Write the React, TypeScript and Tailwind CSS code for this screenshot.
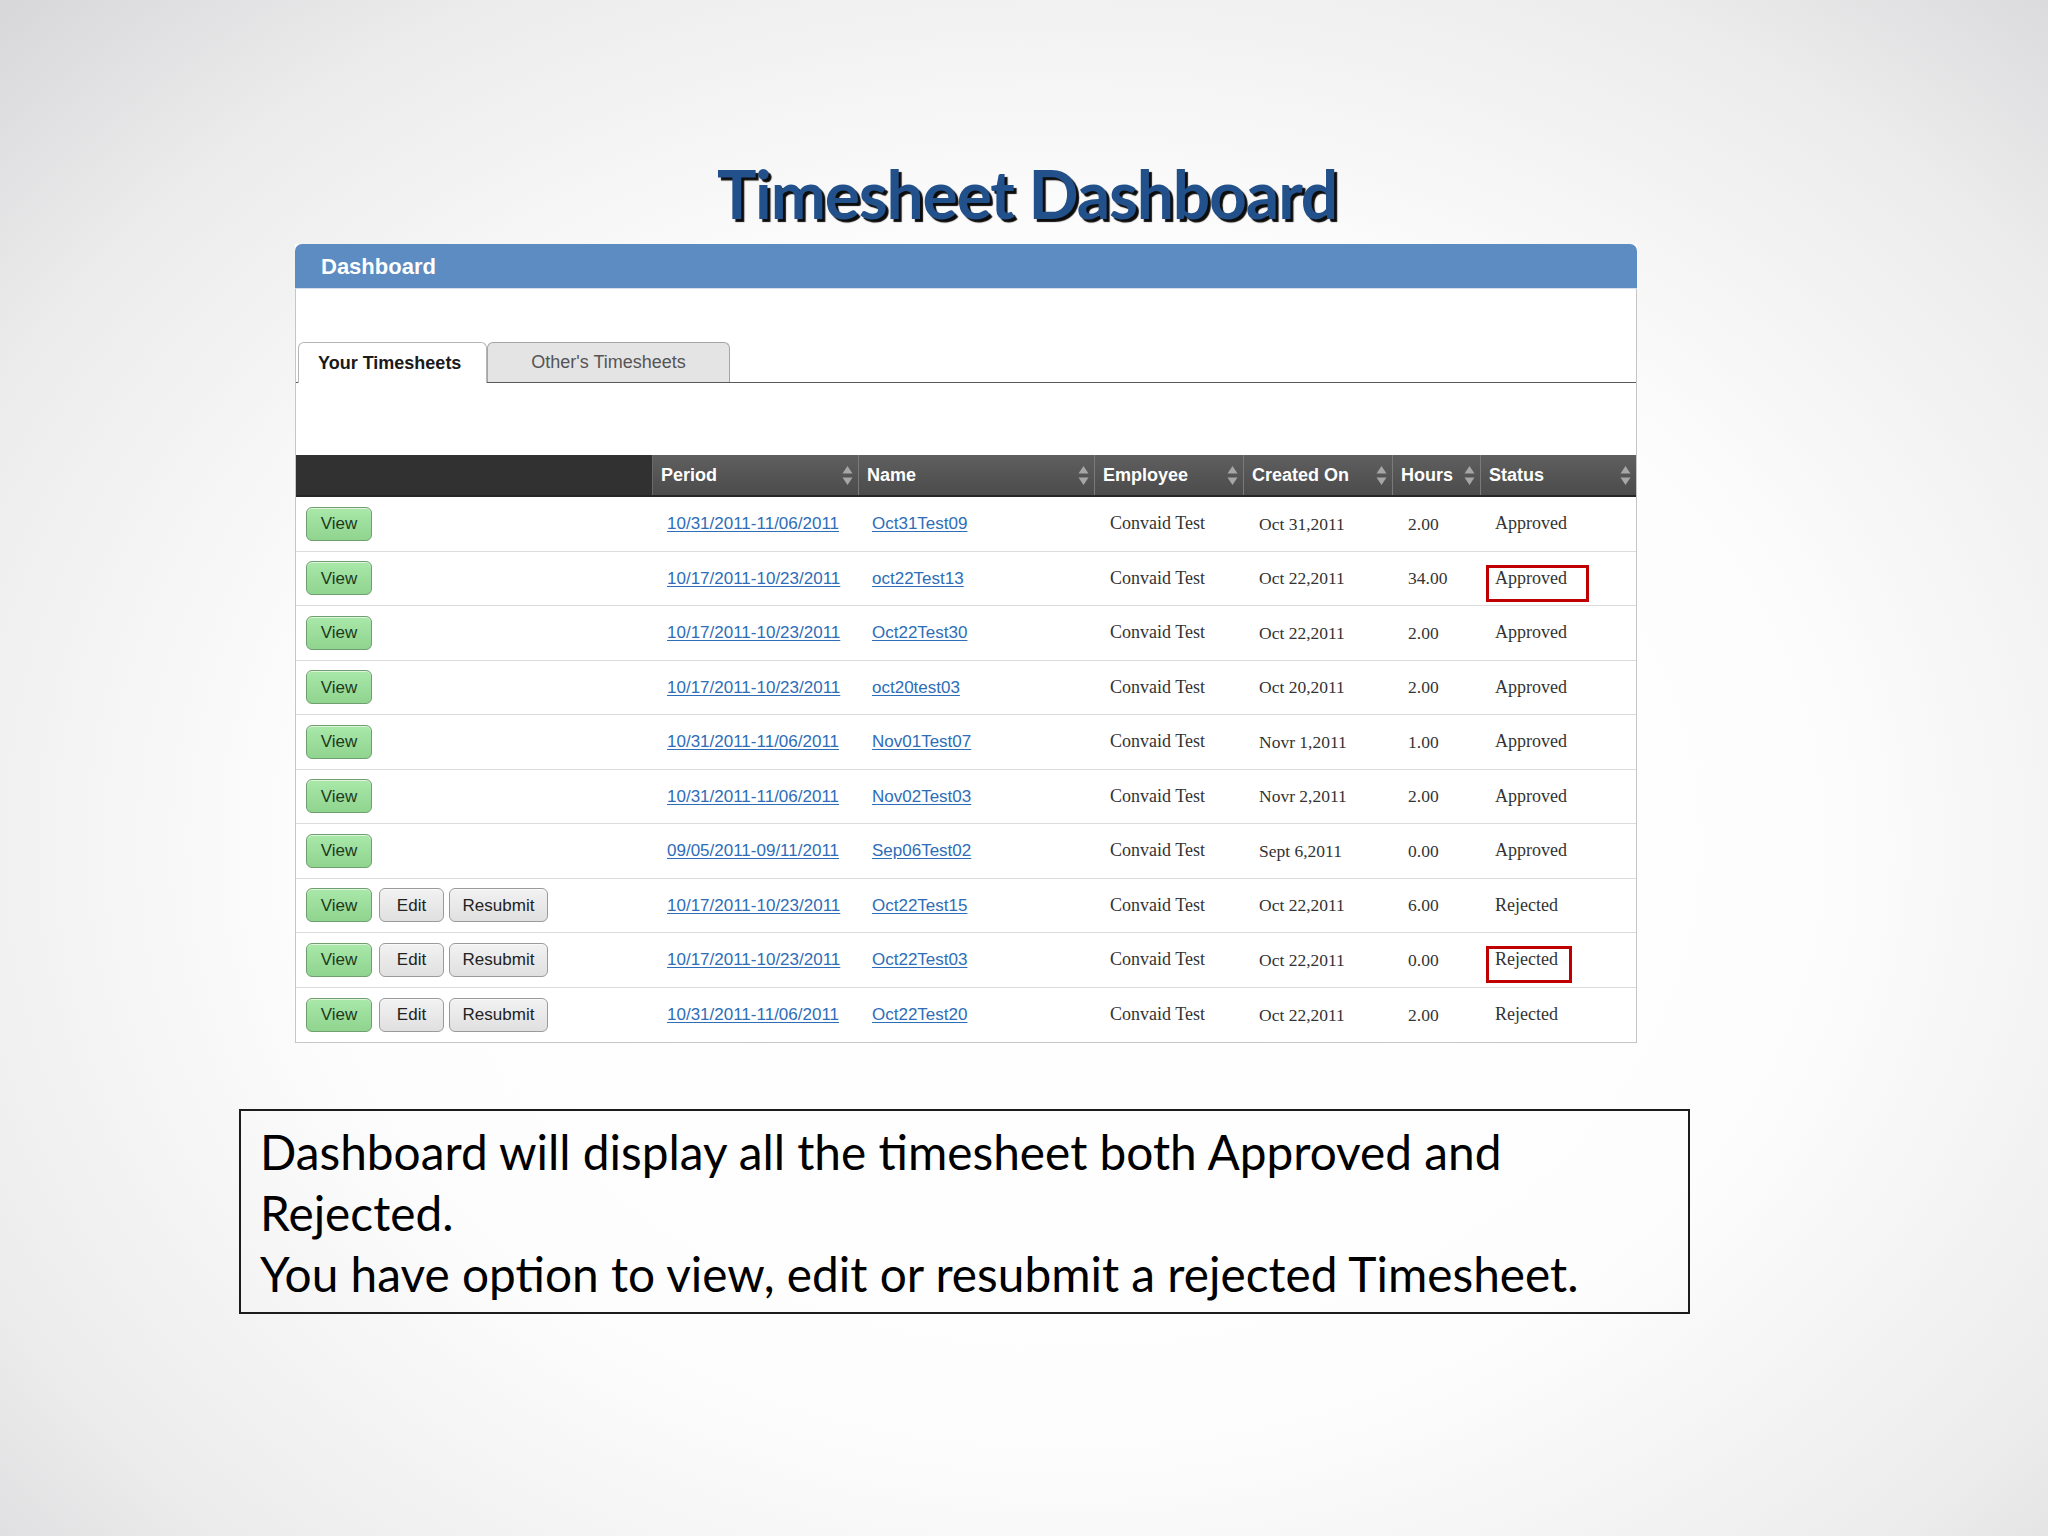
import React from 'react'

type Row = {
  period: string
  name: string
  created: string
  hours: string
  status: 'Approved' | 'Rejected'
  marked?: boolean
}

const rows: Row[] = [
  { period: '10/31/2011-11/06/2011', name: 'Oct31Test09', created: 'Oct 31,2011', hours: '2.00', status: 'Approved' },
  { period: '10/17/2011-10/23/2011', name: 'oct22Test13', created: 'Oct 22,2011', hours: '34.00', status: 'Approved', marked: true },
  { period: '10/17/2011-10/23/2011', name: 'Oct22Test30', created: 'Oct 22,2011', hours: '2.00', status: 'Approved' },
  { period: '10/17/2011-10/23/2011', name: 'oct20test03', created: 'Oct 20,2011', hours: '2.00', status: 'Approved' },
  { period: '10/31/2011-11/06/2011', name: 'Nov01Test07', created: 'Novr 1,2011', hours: '1.00', status: 'Approved' },
  { period: '10/31/2011-11/06/2011', name: 'Nov02Test03', created: 'Novr 2,2011', hours: '2.00', status: 'Approved' },
  { period: '09/05/2011-09/11/2011', name: 'Sep06Test02', created: 'Sept 6,2011', hours: '0.00', status: 'Approved' },
  { period: '10/17/2011-10/23/2011', name: 'Oct22Test15', created: 'Oct 22,2011', hours: '6.00', status: 'Rejected' },
  { period: '10/17/2011-10/23/2011', name: 'Oct22Test03', created: 'Oct 22,2011', hours: '0.00', status: 'Rejected', marked: true },
  { period: '10/31/2011-11/06/2011', name: 'Oct22Test20', created: 'Oct 22,2011', hours: '2.00', status: 'Rejected' },
]

const cols = 'grid grid-cols-[356px_206px_236px_149px_149px_88px_156px]'

function SortIcon() {
  return (
    <svg width="11" height="21" viewBox="0 0 11 21" className="shrink-0">
      <path d="M5.5 1 L10.5 8.5 L0.5 8.5 Z" fill="#a6a6a6" />
      <path d="M5.5 20 L10.5 12.5 L0.5 12.5 Z" fill="#a6a6a6" />
    </svg>
  )
}

function HeadCell({ label, first }: { label: string; first?: boolean }) {
  return (
    <div
      className={`flex items-center justify-between pl-[8px] pr-[5px] bg-gradient-to-b from-[#5f5f5f] to-[#4b4b4b] ${first ? 'border-l border-[#6a6a6a]' : 'border-l border-[#7a7a7a]'}`}
    >
      <span className="text-[18px] font-bold text-white">{label}</span>
      <SortIcon />
    </div>
  )
}

function Btn({ children, kind }: { children: React.ReactNode; kind: 'view' | 'plain' }) {
  const base = 'h-[34px] rounded-[6px] border text-[17px] flex items-center justify-center shadow-[inset_0_1px_0_rgba(255,255,255,0.6)]'
  if (kind === 'view')
    return (
      <div className={`${base} w-[66px] border-[#6f9e6f] bg-gradient-to-b from-[#a9e8a9] to-[#8fd48f] text-[#1e3a1e]`}>{children}</div>
    )
  return <div className={`${base} border-[#9a9a9a] bg-gradient-to-b from-[#f2f2f2] to-[#e0e0e0] text-[#222]`}>{children}</div>
}

export default function App() {
  return (
    <div className="w-[2048px] h-[1536px] overflow-hidden flex flex-col bg-[radial-gradient(ellipse_at_52%_55%,#ffffff_0%,#fdfdfd_50%,#ececed_80%,#d7d7d9_100%)] font-['Liberation_Sans',Arial,sans-serif]">
      {/* title */}
      <h1 className="mt-[161px] ml-[717px] text-[66px] leading-none font-bold text-[#22508a] font-['Lato','Open_Sans',sans-serif] tracking-[-1.2px] [text-shadow:3px_3px_1px_#0d0d0d]">
        Timesheet Dashboard
      </h1>

      {/* dashboard panel */}
      <div className="mt-[17px] ml-[295px] w-[1342px] bg-white">
        <div className="h-[45px] rounded-t-[7px] bg-[#5c8cc2] border-b border-[#d4dfea] flex items-center pl-[26px]">
          <span className="text-[22px] font-bold text-white">Dashboard</span>
        </div>

        <div className="border-x border-b border-[#c6c6c6]">
          {/* tabs */}
          <div className="pt-[54px]">
            <div className="flex items-end h-[40px] border-b border-[#5a5a5a]">
              <div className="ml-[2px] w-[189px] h-[41px] -mb-px rounded-t-[6px] border border-b-0 border-[#b5b5b5] bg-white flex items-center pl-[19px]">
                <span className="text-[18px] font-bold text-[#1a1a1a]">Your Timesheets</span>
              </div>
              <div className="w-[243px] h-[40px] rounded-t-[6px] border border-b-0 border-[#a5a5a5] bg-[#e4e4e4] flex items-center justify-center">
                <span className="text-[18px] text-[#555]">Other's Timesheets</span>
              </div>
            </div>
          </div>

          {/* table */}
          <div className="mt-[72px]">
            <div className={`${cols} h-[42px] bg-[#313131] border-b-2 border-[#262626]`}>
              <div className="bg-[#313131]" />
              <HeadCell label="Period" first />
              <HeadCell label="Name" />
              <HeadCell label="Employee" />
              <HeadCell label="Created On" />
              <HeadCell label="Hours" />
              <HeadCell label="Status" />
            </div>

            {rows.map((r, i) => (
              <div
                key={i}
                className={`${cols} h-[54.5px] items-center ${i < rows.length - 1 ? 'border-b border-[#dcdcdc]' : ''}`}
              >
                <div className="flex items-center pl-[10px]">
                  <Btn kind="view">View</Btn>
                  {r.status === 'Rejected' && (
                    <>
                      <div className="ml-[7px] w-[65px]">
                        <Btn kind="plain">Edit</Btn>
                      </div>
                      <div className="ml-[5px] w-[99px]">
                        <Btn kind="plain">Resubmit</Btn>
                      </div>
                    </>
                  )}
                </div>
                <div className="pl-[15px]">
                  <a className="text-[17px] text-[#2e6db8] underline underline-offset-2">{r.period}</a>
                </div>
                <div className="pl-[14px]">
                  <a className="text-[17px] text-[#2e6db8] underline underline-offset-2">{r.name}</a>
                </div>
                <div className="pl-[16px] text-[18px] text-[#333] font-['Liberation_Serif',serif]">Convaid Test</div>
                <div className="pl-[16px] text-[17.5px] text-[#333] font-['Liberation_Serif',serif]">{r.created}</div>
                <div className="pl-[16px] text-[17.5px] text-[#333] font-['Liberation_Serif',serif]">{r.hours}</div>
                <div className="pl-[15px] text-[18px] text-[#333] font-['Liberation_Serif',serif]">
                  <span className="relative">
                    {r.status}
                    {r.marked && (
                      <span
                        className={`absolute -left-[9px] -top-[3px] h-[37px] border-[3px] border-[#c00000] ${r.status === 'Approved' ? 'w-[103px]' : 'w-[86px]'}`}
                      />
                    )}
                  </span>
                </div>
              </div>
            ))}
          </div>
        </div>
      </div>

      {/* note box */}
      <div className="mt-[66px] ml-[239px] w-[1451px] h-[205px] border-2 border-[#1c1c1c] pl-[19px] pt-[10px] font-['Lato','Open_Sans',sans-serif] text-[47.8px] leading-[61px] text-black">
        <div className="whitespace-nowrap">Dashboard will display all the timesheet both Approved and</div>
        <div className="whitespace-nowrap">Rejected.</div>
        <div className="whitespace-nowrap">You have option to view, edit or resubmit a rejected Timesheet.</div>
      </div>
    </div>
  )
}
